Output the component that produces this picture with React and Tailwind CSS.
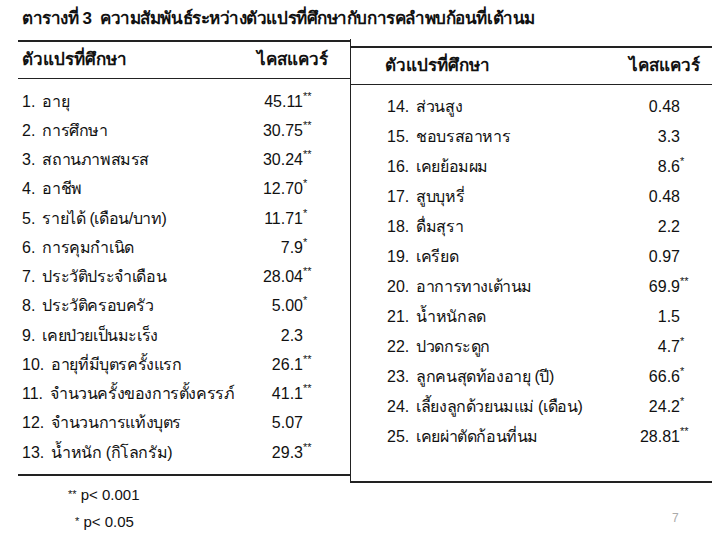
import React from "react";

const left = [
  ["1.", "อายุ", "45.11", "**"],
  ["2.", "การศึกษา", "30.75", "**"],
  ["3.", "สถานภาพสมรส", "30.24", "**"],
  ["4.", "อาชีพ", "12.70", "*"],
  ["5.", "รายได้ (เดือน/บาท)", "11.71", "*"],
  ["6.", "การคุมกำเนิด", "7.9", "*"],
  ["7.", "ประวัติประจำเดือน", "28.04", "**"],
  ["8.", "ประวัติครอบครัว", "5.00", "*"],
  ["9.", "เคยป่วยเป็นมะเร็ง", "2.3", ""],
  ["10.", "อายุที่มีบุตรครั้งแรก", "26.1", "**"],
  ["11.", "จำนวนครั้งของการตั้งครรภ์", "41.1", "**"],
  ["12.", "จำนวนการแท้งบุตร", "5.07", ""],
  ["13.", "น้ำหนัก (กิโลกรัม)", "29.3", "**"],
];

const right = [
  ["14.", "ส่วนสูง", "0.48", ""],
  ["15.", "ชอบรสอาหาร", "3.3", ""],
  ["16.", "เคยย้อมผม", "8.6", "*"],
  ["17.", "สูบบุหรี่", "0.48", ""],
  ["18.", "ดื่มสุรา", "2.2", ""],
  ["19.", "เครียด", "0.97", ""],
  ["20.", "อาการทางเต้านม", "69.9", "**"],
  ["21.", "น้ำหนักลด", "1.5", ""],
  ["22.", "ปวดกระดูก", "4.7", "*"],
  ["23.", "ลูกคนสุดท้องอายุ (ปี)", "66.6", "*"],
  ["24.", "เลี้ยงลูกด้วยนมแม่ (เดือน)", "24.2", "*"],
  ["25.", "เคยผ่าตัดก้อนที่นม", "28.81", "**"],
];

function Row({ r, h }) {
  return (
    <div className={`flex items-center ${h}`}>
      <span className="shrink-0 mr-[7px]">{r[0]}</span>
      <span className="flex-1 min-w-0 whitespace-nowrap tracking-[-0.4px]">{r[1]}</span>
      <span className="w-[90px] shrink-0 text-right whitespace-nowrap">
        {r[2]}
        <span className="inline-block w-[14px] text-left text-[11px] align-top leading-[13px]">{r[3]}</span>
      </span>
    </div>
  );
}

export default function App() {
  return (
    <div
      className="relative w-[720px] h-[540px] bg-white text-[#111] overflow-hidden"
      style={{ fontFamily: '"Liberation Sans", "Noto Sans", sans-serif' }}
    >
      <div className="pt-[6px] pl-[22px] h-[41px] text-[17px] font-bold tracking-[-0.45px] whitespace-nowrap">
        ตารางที่ 3&nbsp; ความสัมพันธ์ระหว่างตัวแปรที่ศึกษากับการคลำพบก้อนที่เต้านม
      </div>
      <div className="flex items-start pl-[18px]">
        {/* left table */}
        <div className="w-[332px] text-[16px] -mt-[1px]">
          <div className="border-t-2 border-[#222] h-[39px] border-b-[1.5px] flex items-center justify-between pl-[4px] pr-[22px] font-bold text-[17px]">
            <span>ตัวแปรที่ศึกษา</span>
            <span>ไคสแควร์</span>
          </div>
          <div className="pt-[8px] pb-[7px] pl-[4px] pr-[33px] border-b-2 border-[#222]">
            {left.map((r) => (
              <Row key={r[0]} r={r} h="h-[29.25px]" />
            ))}
          </div>
        </div>
        {/* right table */}
        <div className="w-[362px] h-[444px] border-l-[1.5px] border-[#222] -mt-[2px] pt-[7px] flex flex-col text-[16px]">
          <div className="border-t-2 border-[#222] h-[39px] border-b-[1.5px] flex items-center justify-between pl-[34px] pr-[12px] font-bold text-[17px]">
            <span>ตัวแปรที่ศึกษา</span>
            <span>ไคสแควร์</span>
          </div>
          <div className="flex-1 pt-[7px] pl-[36px] pr-[18px] border-b-2 border-[#222]">
            {right.map((r) => (
              <Row key={r[0]} r={r} h="h-[30px]" />
            ))}
          </div>
        </div>
      </div>
      <div className="pl-[68px] -mt-[2px] text-[15px] leading-[27px]">
        <div>
          <span className="text-[11px] align-top">**</span> p&lt; 0.001
        </div>
        <div className="pl-[7px]">
          <span className="text-[11px] align-top">*</span> p&lt; 0.05
        </div>
      </div>
      <div className="absolute left-[672px] top-[509px] text-[12px] text-[#aaa]">7</div>
    </div>
  );
}
